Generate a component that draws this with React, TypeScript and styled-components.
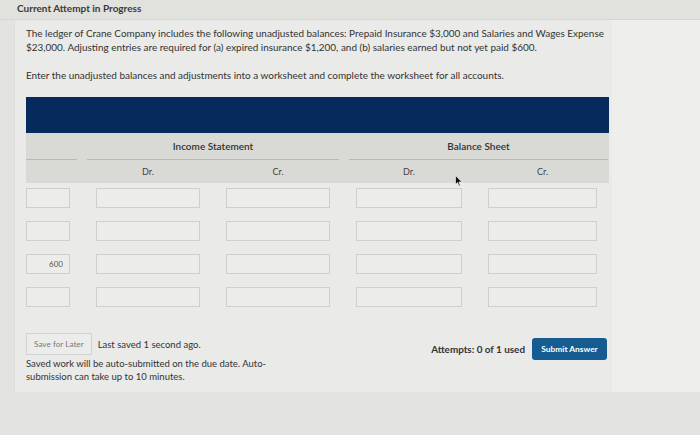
import React from 'react'
import styled, { createGlobalStyle } from 'styled-components'

const GlobalStyle = createGlobalStyle`
    html, body {
        margin: 0;
        padding: 0;
        background: #e3e3e1;
    }
    * {
        box-sizing: border-box;
    }
`

const Page = styled.div`
    width: 700px;
    height: 435px;
    overflow: hidden;
    position: relative;
    background: #e3e3e1;
    font-family: Lato, 'Open Sans', sans-serif;
    color: #333;
`
const TopBar = styled.div`
    height: 20px;
    padding: 0 17px;
    line-height: 17px;
    font-size: 10px;
    font-weight: 700;
    color: #3a3a3a;
    background: #e1e1de;
    border-bottom: 1px solid #d7d7d4;
`
const Content = styled.div`
    display: flex;
    height: 372px;
`
const Main = styled.div`
    width: 598px;
    padding: 6px 0 0 11px;
    background: #eaeae8;
    border-left: 1px solid #dededb;
    margin-left: 14px;
`
const Side = styled.div`
    flex: 1;
    background: #eeeeec;
`
const Para = styled.p<{ $gap?: number }>`
    margin: 0 0 ${p => p.$gap ?? 0}px;
    font-size: 9.95px;
    line-height: 14px;
    white-space: nowrap;
    color: #333;
`
const Table = styled.div`
    width: 583px;
`
const NavyBar = styled.div`
    height: 36px;
    background: #062a5b;
`
const HeadArea = styled.div`
    background: #d9d9d6;
`
const GroupRow = styled.div`
    display: grid;
    grid-template-columns: 51px 252px 259px;
    column-gap: 10px;
    height: 26px;
`
const GroupCell = styled.div`
    border-bottom: 1px solid #b9b9b6;
    font-size: 10px;
    font-weight: 600;
    text-align: center;
    line-height: 26px;
    color: #333;
`
const ColGrid = styled.div`
    display: grid;
    grid-template-columns: 44px 104px 104px 106px 109px;
    column-gap: 26px;
`
const SubRow = styled(ColGrid)`
    height: 24px;
    align-items: center;
    font-size: 9px;
    color: #444;
    text-align: center;
`
const Rows = styled(ColGrid)`
    row-gap: 13px;
    padding-top: 5px;
`
const Cell = styled.div`
    height: 20px;
    border: 1px solid #cfcfcc;
    background: #ececea;
    font-size: 8px;
    color: #555;
    text-align: right;
    line-height: 18px;
    padding-right: 6px;
`
const Footer = styled.div`
    display: flex;
    justify-content: space-between;
    align-items: flex-start;
    margin-top: 26px;
    width: 581px;
`
const SaveRow = styled.div`
    display: flex;
    align-items: center;
    gap: 6px;
`
const SaveButton = styled.button`
    height: 22px;
    padding: 0 7px;
    border: 1px solid #d2d2cf;
    background: #ececea;
    font-family: Lato, sans-serif;
    font-size: 8.2px;
    color: #7a7a7a;
`
const Small = styled.div`
    font-size: 9.5px;
    line-height: 13px;
    color: #333;
`
const Note = styled(Small)`
    margin-top: 2px;
`
const Submit = styled.div`
    display: flex;
    align-items: center;
    gap: 7px;
    margin-top: 5px;
`
const Attempts = styled.span`
    font-size: 9.9px;
    font-weight: 700;
    color: #333;
`
const SubmitButton = styled.button`
    height: 22px;
    width: 75px;
    padding: 0;
    border: none;
    border-radius: 3px;
    background: #165c91;
    color: #fff;
    font-family: Lato, sans-serif;
    font-size: 8.4px;
    font-weight: 700;
`
const Pointer = styled.svg`
    position: absolute;
    left: 455px;
    top: 175px;
`

const rows = [
    ['', '', '', '', ''],
    ['', '', '', '', ''],
    ['600', '', '', '', ''],
    ['', '', '', '', ''],
]

export default function App() {
    return (
        <Page>
            <GlobalStyle />
            <TopBar>Current Attempt in Progress</TopBar>
            <Content>
                <Main>
                    <Para>
                        The ledger of Crane Company includes the following unadjusted balances: Prepaid Insurance $3,000 and Salaries and Wages Expense
                    </Para>
                    <Para $gap={14}>
                        $23,000. Adjusting entries are required for (a) expired insurance $1,200, and (b) salaries earned but not yet paid $600.
                    </Para>
                    <Para $gap={15}>
                        Enter the unadjusted balances and adjustments into a worksheet and complete the worksheet for all accounts.
                    </Para>
                    <Table>
                        <NavyBar />
                        <HeadArea>
                            <GroupRow>
                                <GroupCell />
                                <GroupCell>Income Statement</GroupCell>
                                <GroupCell>Balance Sheet</GroupCell>
                            </GroupRow>
                            <SubRow>
                                <span />
                                <span>Dr.</span>
                                <span>Cr.</span>
                                <span>Dr.</span>
                                <span>Cr.</span>
                            </SubRow>
                        </HeadArea>
                        <Rows>
                            {rows.map((r, i) =>
                                r.map((v, j) => <Cell key={`${i}-${j}`}>{v}</Cell>)
                            )}
                        </Rows>
                    </Table>
                    <Footer>
                        <div>
                            <SaveRow>
                                <SaveButton>Save for Later</SaveButton>
                                <Small>Last saved 1 second ago.</Small>
                            </SaveRow>
                            <Note>
                                Saved work will be auto-submitted on the due date. Auto-<br />
                                submission can take up to 10 minutes.
                            </Note>
                        </div>
                        <Submit>
                            <Attempts>Attempts: 0 of 1 used</Attempts>
                            <SubmitButton>Submit Answer</SubmitButton>
                        </Submit>
                    </Footer>
                </Main>
                <Side />
            </Content>
            <Pointer width="8" height="12" viewBox="0 0 8 12">
                <path d="M0.5 0.5 L0.5 9.5 L2.6 7.6 L4 11 L5.3 10.4 L3.9 7.1 L6.8 7.1 Z" fill="#111" stroke="#fff" strokeWidth="0.6" />
            </Pointer>
        </Page>
    )
}
